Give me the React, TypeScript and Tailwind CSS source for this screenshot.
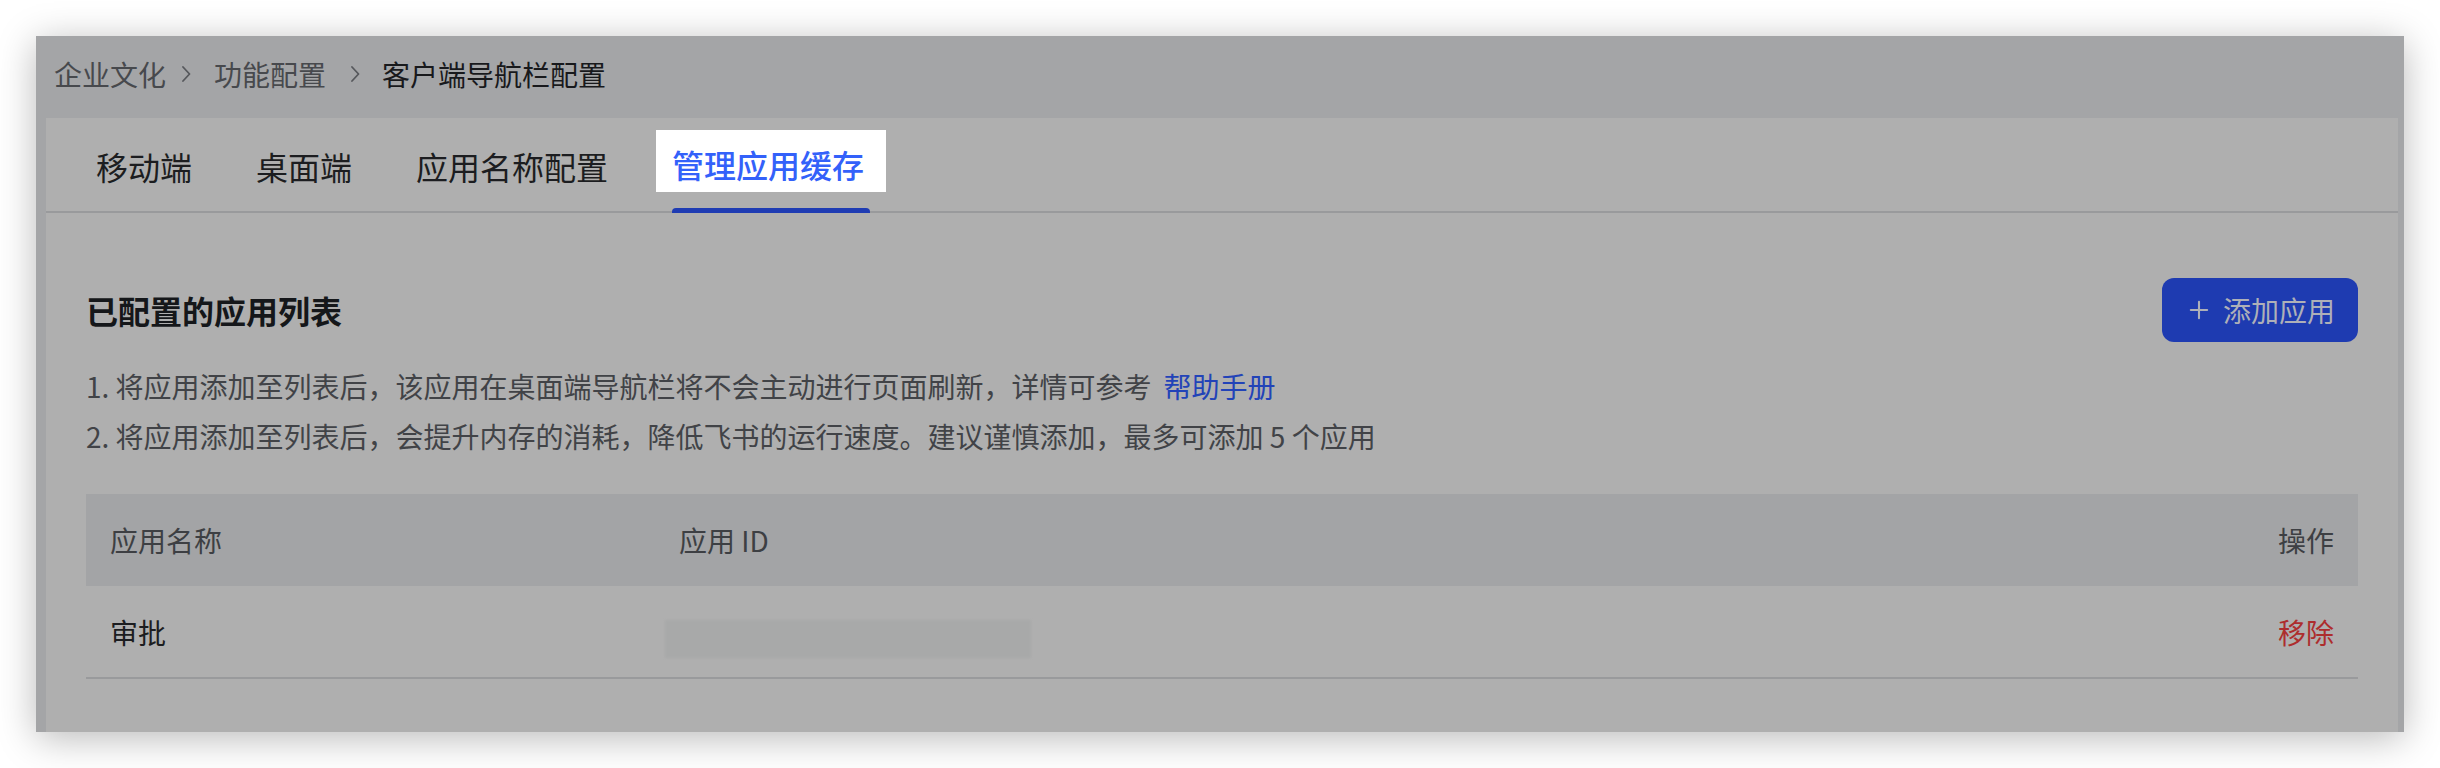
import { Plus } from 'lucide-react';

const font = { fontFamily: '"Noto Sans CJK SC", "Noto Sans", sans-serif' };

function Chevron() {
    return (
        <svg width="12" height="16" viewBox="0 0 12 16" fill="none" className="shrink-0">
            <path d="M3 1 L9.5 8 L3 15" stroke="#56585c" strokeWidth="1.8" strokeLinecap="round" strokeLinejoin="round" />
        </svg>
    );
}

const tabs = ['移动端', '桌面端', '应用名称配置', '管理应用缓存'];

export default function App() {
    const active = 3;

    return (
        <div className="w-[2440px] h-[768px] bg-white pt-[36px] pl-[36px]" style={font}>
            <div className="w-[2368px] h-[696px] bg-[#a4a5a7] shadow-[0_6px_36px_rgba(0,0,0,0.28)] flex flex-col">
                {/* breadcrumb */}
                <div className="h-[82px] shrink-0 flex items-center pl-[18px] pb-[6px] text-[28px] leading-none">
                    <span className="text-[#47494d]">企业文化</span>
                    <span className="ml-[14px] mr-[22px] flex"><Chevron /></span>
                    <span className="text-[#47494d]">功能配置</span>
                    <span className="ml-[23px] mr-[21px] flex"><Chevron /></span>
                    <span className="text-[#18191c]">客户端导航栏配置</span>
                </div>

                <div className="flex-1 ml-[10px] mr-[6px] bg-[#afafaf] flex flex-col">
                    {/* tabs */}
                    <div className="h-[95px] shrink-0 flex gap-[64px] pl-[50px] border-b-[2px] border-[#999a9c]">
                        {tabs.map((t, i) => (
                            <div key={t} className="relative flex items-center h-full pt-[2px]">
                                {i === active ? (
                                    <>
                                        <span className="-ml-[16px] -mr-[22px] pl-[16px] pr-[22px] h-[62px] -mt-[10px] pt-[6px] flex items-center bg-white text-[32px] leading-none text-[#3361fa] font-medium">
                                            {t}
                                        </span>
                                        <span className="absolute left-0 -right-[6px] -bottom-[2px] h-[5px] rounded-t-[4px] bg-[#1f3cb3]" />
                                    </>
                                ) : (
                                    <span className="text-[32px] leading-none text-[#1c1d20]">{t}</span>
                                )}
                            </div>
                        ))}
                    </div>

                    {/* content */}
                    <div className="px-[40px] flex flex-col">
                        <div className="mt-[65px] h-[64px] flex items-center justify-between">
                            <h2 className="text-[32px] leading-none font-semibold text-[#15171a]">已配置的应用列表</h2>
                            <button className="h-[64px] w-[196px] rounded-[12px] bg-[#1e3bb1] flex items-center justify-center gap-[10px] text-[28px] leading-none text-[#aeb0b8]">
                                <Plus size={28} strokeWidth={1.8} />
                                添加应用
                            </button>
                        </div>

                        <div className="mt-[19px] text-[28px] leading-[50px] text-[#414347]">
                            <p>
                                1. 将应用添加至列表后，该应用在桌面端导航栏将不会主动进行页面刷新，详情可参考
                                <span className="ml-[12px] text-[#2243b8]">帮助手册</span>
                            </p>
                            <p>2. 将应用添加至列表后，会提升内存的消耗，降低飞书的运行速度。建议谨慎添加，最多可添加 5 个应用</p>
                        </div>

                        {/* table */}
                        <div className="mt-[33px] text-[28px] leading-none">
                            <div className="h-[92px] bg-[#a3a4a6] grid grid-cols-[569px_1fr_auto] items-center px-[24px] text-[#3d3f43]">
                                <span>应用名称</span>
                                <span>应用 ID</span>
                                <span>操作</span>
                            </div>
                            <div className="h-[93px] grid grid-cols-[569px_1fr_auto] items-center px-[24px] border-b-[2px] border-[#999a9c]">
                                <span className="text-[#1c1d20]">审批</span>
                                <span className="flex">
                                    <span className="-ml-[14px] mt-[14px] w-[366px] h-[38px] bg-[#a8a9a9] blur-[1px]" />
                                </span>
                                <span className="text-[#ad2d2d]">移除</span>
                            </div>
                        </div>
                    </div>
                </div>
            </div>
        </div>
    );
}
